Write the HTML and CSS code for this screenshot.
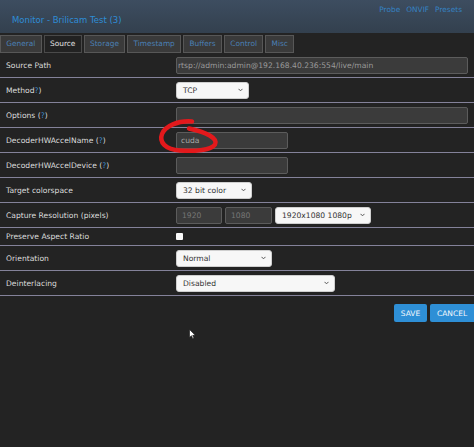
FILE: index.html
```html
<!DOCTYPE html>
<html>
<head>
<meta charset="utf-8">
<link rel="stylesheet" href="styles.css">
</head>
<body>
<div class="page">
  <header class="hdr">
    <h1 class="title">Monitor - Brilicam Test (3)</h1>
    <nav class="links"><a class="lnk">Probe</a><a class="lnk">ONVIF</a><a class="lnk">Presets</a></nav>
  </header>
  <ul class="tabs">
    <li class="tab">General</li>
    <li class="tab active">Source</li>
    <li class="tab">Storage</li>
    <li class="tab">Timestamp</li>
    <li class="tab">Buffers</li>
    <li class="tab">Control</li>
    <li class="tab">Misc</li>
  </ul>
  <div class="form">
    <div class="row">
      <div class="lbl">Source Path</div>
      <div class="val"><input class="inp w-full path" value="rtsp://admin:admin@192.168.40.236:554/live/main"></div>
    </div>
    <div class="row">
      <div class="lbl">Method<span class="help">?</span>)</div>
      <div class="val"><div class="sel w-method"><span>TCP</span><svg class="chev" viewBox="0 0 6 4"><path d="M0.6 0.6 L3 3 L5.4 0.6"/></svg></div></div>
    </div>
    <div class="row">
      <div class="lbl">Options (<span class="help">?</span>)</div>
      <div class="val"><input class="inp w-full" value=""></div>
    </div>
    <div class="row">
      <div class="lbl">DecoderHWAccelName (<span class="help">?</span>)</div>
      <div class="val"><input class="inp w-dec" value="cuda"></div>
    </div>
    <div class="row">
      <div class="lbl">DecoderHWAccelDevice (<span class="help">?</span>)</div>
      <div class="val"><input class="inp w-dec" value=""></div>
    </div>
    <div class="row">
      <div class="lbl">Target colorspace</div>
      <div class="val"><div class="sel w-color"><span>32 bit color</span><svg class="chev" viewBox="0 0 6 4"><path d="M0.6 0.6 L3 3 L5.4 0.6"/></svg></div></div>
    </div>
    <div class="row">
      <div class="lbl">Capture Resolution (pixels)</div>
      <div class="val res">
        <input class="inp dim w-w" value="1920">
        <input class="inp dim w-h" value="1080">
        <div class="sel w-res"><span>1920x1080 1080p</span><svg class="chev" viewBox="0 0 6 4"><path d="M0.6 0.6 L3 3 L5.4 0.6"/></svg></div>
      </div>
    </div>
    <div class="row short">
      <div class="lbl">Preserve Aspect Ratio</div>
      <div class="val"><span class="chk"></span></div>
    </div>
    <div class="row">
      <div class="lbl">Orientation</div>
      <div class="val"><div class="sel w-orient"><span>Normal</span><svg class="chev" viewBox="0 0 6 4"><path d="M0.6 0.6 L3 3 L5.4 0.6"/></svg></div></div>
    </div>
    <div class="row">
      <div class="lbl">Deinterlacing</div>
      <div class="val"><div class="sel w-deint"><span>Disabled</span><svg class="chev" viewBox="0 0 6 4"><path d="M0.6 0.6 L3 3 L5.4 0.6"/></svg></div></div>
    </div>
  </div>
  <div class="actions">
    <button class="btn save">SAVE</button>
    <button class="btn cancel">CANCEL</button>
  </div>
  <svg class="scribble" width="474" height="447" viewBox="0 0 474 447">
    <path d="M192 121.5 C178 120.5 165 126 162 134 C159 142 165 149.5 180 150.5 C196 151.5 211 150 215 144.5 C218.5 138.5 206 132 189 128.5"/>
  </svg>
  <svg class="cursor" width="8" height="11" viewBox="0 0 8 11">
    <path d="M0.5 0.5 L0.5 8.5 L2.4 6.7 L3.8 9.8 L5 9.3 L3.7 6.3 L6.3 6.3 Z"/>
  </svg>
</div>
</body>
</html>
```
FILE: styles.css
```css
html, body {
  margin: 0;
  padding: 0;
  background: #232323;
}
.page {
  position: relative;
  width: 474px;
  height: 447px;
  overflow: hidden;
  font-family: "DejaVu Sans", Verdana, sans-serif;
  font-size: 7.6px;
  color: #d6d6d6;
  background: #232323;
}
.hdr {
  height: 33px;
  box-sizing: border-box;
  background: linear-gradient(#3d4d60, #33404e);
  display: flex;
  justify-content: space-between;
  align-items: flex-start;
  padding: 0 12px 0 12px;
}
.title {
  margin: 15px 0 0 0;
  font-size: 8.5px;
  font-weight: normal;
  line-height: 11px;
  color: #2e8dd6;
}
.links {
  display: flex;
  gap: 6px;
  margin-top: 4px;
  line-height: 11px;
  font-size: 7.4px;
}
.lnk {
  color: #3583c4;
}
.tabs {
  list-style: none;
  margin: 2px 0 0 0;
  padding: 0;
  display: flex;
  gap: 2px;
  height: 18px;
}
.tab {
  box-sizing: border-box;
  height: 18px;
  line-height: 16px;
  padding: 0 5.3px;
  border: 1px solid #575757;
  background: #3a3a3a;
  color: #4a80b6;
  font-size: 7.4px;
}
.tab.active {
  background: #222222;
  color: #e4e4e4;
  border-color: #4a4a4a;
}
.form {
  display: flex;
  flex-direction: column;
}
.row {
  display: flex;
  align-items: center;
  height: 25px;
  box-sizing: border-box;
  border-bottom: 1px solid #84829a;
}
.row.short {
  height: 18px;
}
.lbl {
  width: 176px;
  box-sizing: border-box;
  padding-left: 6px;
  color: #dcdcdc;
  white-space: nowrap;
}
.help {
  color: #3a86c8;
}
.val {
  display: flex;
  align-items: center;
  gap: 3px;
}
.inp {
  box-sizing: border-box;
  height: 17px;
  margin: 0;
  padding: 0 4px;
  border: 1px solid #5c5c5c;
  border-radius: 2px;
  background: #3b3b3b;
  color: #a8a8a8;
  font-family: inherit;
  font-size: 7.6px;
  outline: none;
}
.inp.path {
  padding-left: 1px;
  color: #9a9a9a;
}
.inp.dim {
  color: #777;
  padding-left: 5px;
}
.w-full { width: 292px; }
.w-dec { width: 112px; }
.w-w { width: 46px; }
.w-h { width: 47px; }
.sel {
  box-sizing: border-box;
  height: 17px;
  display: flex;
  align-items: center;
  justify-content: space-between;
  padding: 0 5px 0 6px;
  background: #f7f7f7;
  border: 1px solid #cfcfcf;
  border-radius: 3px;
  color: #333;
}
.chev {
  width: 5px;
  height: 4px;
  fill: none;
  stroke: #555;
  stroke-width: 1.2;
}
.w-method { width: 73px; }
.w-color { width: 76px; }
.w-res { width: 96px; }
.w-orient { width: 96px; }
.w-deint { width: 159px; }
.chk {
  display: block;
  width: 7px;
  height: 7px;
  background: #fafafa;
  border-radius: 1px;
}
.actions {
  display: flex;
  justify-content: flex-end;
  gap: 3px;
  margin-top: 8px;
}
.btn {
  box-sizing: border-box;
  height: 18px;
  padding: 0;
  border: none;
  border-radius: 2px;
  background: #2e8fd6;
  color: #f4f8fc;
  font-family: inherit;
  font-size: 7.5px;
}
.save { width: 33px; }
.cancel { width: 44px; border-radius: 2px 0 0 2px; }
.scribble {
  position: absolute;
  left: 0;
  top: 0;
  pointer-events: none;
}
.scribble path {
  fill: none;
  stroke: #e3191c;
  stroke-width: 4.5;
  stroke-linecap: round;
  stroke-linejoin: round;
}
.cursor {
  position: absolute;
  left: 189px;
  top: 329px;
}
.cursor path {
  fill: #fff;
  stroke: #111;
  stroke-width: 0.6;
}
```
